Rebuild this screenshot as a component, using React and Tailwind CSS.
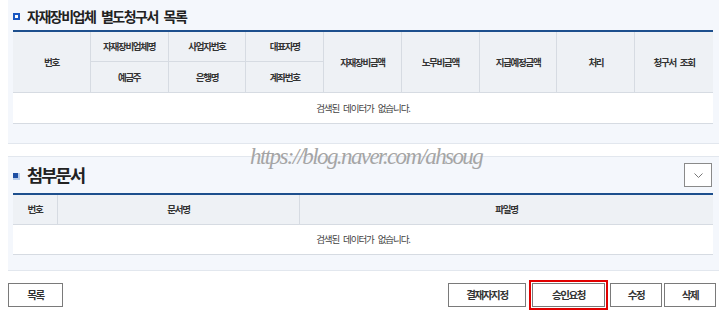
import React from "react";

const KR = { fontFamily: '"Noto Sans CJK KR", "Noto Sans", sans-serif' };

function HCell({ children, className = "" }) {
  return (
    <div
      className={
        "flex items-center justify-center text-[9.5px] font-bold tracking-[-1.3px] [word-spacing:3px] text-[#333] " +
        className
      }
    >
      {children}
    </div>
  );
}

function Btn({ children, className = "" }) {
  return (
    <button
      className={
        "h-[24px] border border-[#7a7a7a] bg-white text-[10.5px] font-bold tracking-[-1.4px] text-[#333] flex items-center justify-center " +
        className
      }
    >
      {children}
    </button>
  );
}

export default function App() {
  return (
    <div className="relative w-[727px] h-[322px] overflow-hidden bg-white" style={KR}>
      {/* Panel 1 */}
      <div className="mx-[8px] bg-[#f4f7fc] border-b border-[#e2e7ee] pl-[5px] pr-[6px] pb-[19px]">
        <div className="h-[30px] flex items-center pt-[3px]">
          <span className="w-[7px] h-[7px] border-2 border-[#1b58c2] bg-white mr-[7px]" />
          <span className="text-[14px] font-semibold tracking-[-1.5px] [word-spacing:4px] text-[#222]">
            자재장비업체 별도청구서 목록
          </span>
        </div>
        <div className="border-t-2 border-[#1d4f8d]">
          <div className="grid grid-cols-9 grid-rows-[30px_30px] bg-[#eef1f5] border-b border-[#d6dbe2]">
            <HCell className="row-span-2 border-r border-[#d6dbe2]">번호</HCell>
            <HCell className="border-r border-b border-[#d6dbe2]">자재장비업체명</HCell>
            <HCell className="border-r border-b border-[#d6dbe2]">사업자번호</HCell>
            <HCell className="border-r border-b border-[#d6dbe2]">대표자명</HCell>
            <HCell className="row-span-2 border-r border-[#d6dbe2]">자재장비금액</HCell>
            <HCell className="row-span-2 border-r border-[#d6dbe2]">노무비금액</HCell>
            <HCell className="row-span-2 border-r border-[#d6dbe2]">지급예정금액</HCell>
            <HCell className="row-span-2 border-r border-[#d6dbe2]">처리</HCell>
            <HCell className="row-span-2">청구서 조회</HCell>
            <HCell className="border-r border-[#d6dbe2]">예금주</HCell>
            <HCell className="border-r border-[#d6dbe2]">은행명</HCell>
            <HCell className="border-r border-[#d6dbe2]">계좌번호</HCell>
          </div>
          <div className="h-[31px] bg-white border-b border-[#d6dbe2] flex items-center justify-center text-[9.5px] tracking-[-1.1px] [word-spacing:3px] text-[#444]">
            검색된 데이터가 없습니다.
          </div>
        </div>
      </div>

      {/* Panel 2 */}
      <div className="mt-[12px] mx-[8px] bg-[#f4f7fc] border-t border-b border-[#e2e7ee] pl-[5px] pr-[6px] pb-[15px]">
        <div className="h-[36px] flex items-center">
          <span className="relative w-[7px] h-[7px] bg-[#b9cdea] mr-[7px] mt-[3px]">
            <span className="absolute left-0 top-0 w-[5px] h-[5px] bg-[#1f4fa3]" />
          </span>
          <span className="text-[17.5px] font-bold tracking-[-1.8px] text-[#222]">첨부문서</span>
          <button className="ml-auto mr-[1px] w-[28px] h-[24px] border border-[#8a8a8a] bg-white flex items-center justify-center">
            <svg width="9" height="5" viewBox="0 0 9 5" fill="none">
              <polyline points="0.5,0.5 4.5,4.5 8.5,0.5" stroke="#777" strokeWidth="1" />
            </svg>
          </button>
        </div>
        <div className="border-t-2 border-[#1d4f8d]">
          <div className="grid grid-cols-[45px_242px_1fr] h-[30px] bg-[#eef1f5] border-b border-[#d6dbe2]">
            <HCell className="border-r border-[#d6dbe2]">번호</HCell>
            <HCell className="border-r border-[#d6dbe2]">문서명</HCell>
            <HCell>파일명</HCell>
          </div>
          <div className="h-[30px] bg-white border-b border-[#d6dbe2] flex items-center justify-center text-[9.5px] tracking-[-1.1px] [word-spacing:3px] text-[#444]">
            검색된 데이터가 없습니다.
          </div>
        </div>
      </div>

      {/* Buttons */}
      <div className="mt-[9px] mx-[8px] pr-[3px] h-[30px] flex items-center">
        <Btn className="w-[55px]">목록</Btn>
        <div className="ml-auto flex items-center gap-[2px]">
          <Btn className="w-[78px] mr-[1px]">결재자지정</Btn>
          <div className="border-2 border-[#e10000] p-[1px]">
            <Btn className="w-[73px]">승인요청</Btn>
          </div>
          <Btn className="w-[52px]">수정</Btn>
          <Btn className="w-[52px]">삭제</Btn>
        </div>
      </div>

      {/* Watermark */}
      <div
        className="absolute left-[250px] top-[145px] text-[23px] italic tracking-[-1.6px] text-[#a5a5a5] leading-none pointer-events-none"
        style={{ fontFamily: '"Times New Roman", "Liberation Serif", Times, serif' }}
      >
        https://blog.naver.com/ahsoug
      </div>
    </div>
  );
}
